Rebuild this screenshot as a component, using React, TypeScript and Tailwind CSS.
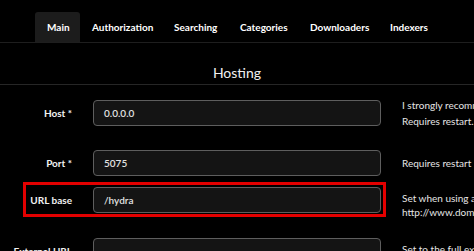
const tabs = [
  { name: 'Main', w: 'w-[45px]', active: true },
  { name: 'Authorization', w: 'w-[82px]' },
  { name: 'Searching', w: 'w-[66px]' },
  { name: 'Categories', w: 'w-[70px]' },
  { name: 'Downloaders', w: 'w-[80px]' },
  { name: 'Indexers', w: 'w-[70px]' },
];

function Field({ label, value, blurred }: { label: string; value?: string; blurred?: boolean }) {
  return (
    <>
      <div className="flex h-[26px] w-[46px] shrink-0 items-center justify-end whitespace-nowrap text-[10px] font-bold text-[#f2f2f2]">
        {label}
      </div>
      <div className="ml-[21px] flex h-[26px] w-[288px] shrink-0 items-center rounded-[4px] border border-[#5e5e5e] bg-[#141414] pl-[10px] text-[10px] font-semibold text-[#e2e2e2]">
        {value}
        {blurred && (
          <div className="mt-[12px] flex gap-[2px]">
            <span className="h-[6px] w-[10px] bg-[#8a8a8a]" />
            <span className="h-[6px] w-[6px] bg-[#6a6a6a]" />
            <span className="h-[6px] w-[12px] bg-[#9a9a9a]" />
            <span className="h-[6px] w-[8px] bg-[#5a5a5a]" />
            <span className="h-[6px] w-[10px] bg-[#808080]" />
          </div>
        )}
      </div>
    </>
  );
}

export default function App() {
  return (
    <div
      className="h-[251px] w-[474px] overflow-hidden bg-black text-[#eeeeee]"
      style={{ fontFamily: 'Lato, "Open Sans", sans-serif' }}
    >
      {/* Tabs */}
      <div className="mt-[12px] flex h-[31px] border-b border-[#1e1e1e] pl-[35px]">
        {tabs.map(t => (
          <div
            key={t.name}
            className={`${t.w} flex shrink-0 items-center rounded-t-[3px] pl-[12px] text-[10px] font-bold text-white ${
              t.active ? 'bg-[#1c1c1c]' : ''
            }`}
          >
            {t.name}
          </div>
        ))}
      </div>

      {/* Section title */}
      <div className="mt-[17px] flex h-[25px] items-center justify-center border-b border-[#262626] text-[14px] text-[#f0f0f0]">
        Hosting
      </div>

      {/* Host */}
      <div className="mt-[10px] flex items-start">
        <div className="ml-[23px] flex w-[363px] shrink-0 items-start border-[3px] border-transparent pt-[2px] pb-px pr-[2px]">
          <Field label="Host *" value="0.0.0.0" />
        </div>
        <div className="ml-[16px] mt-[2px] whitespace-nowrap text-[10px] leading-4 text-[#e6e6e6]">
          <div>I strongly recommend using 127.0.0.1</div>
          <div>Requires restart.</div>
        </div>
      </div>

      {/* Port */}
      <div className="mt-[15px] flex items-start">
        <div className="ml-[23px] flex w-[363px] shrink-0 items-start border-[3px] border-transparent pt-[2px] pb-px pr-[2px]">
          <Field label="Port *" value="5075" />
        </div>
        <div className="ml-[16px] mt-[10px] whitespace-nowrap text-[10px] leading-4 text-[#e6e6e6]">
          Requires restart
        </div>
      </div>

      {/* URL base (highlighted) */}
      <div className="mt-[2px] flex items-start">
        <div className="ml-[23px] flex w-[363px] shrink-0 items-start border-[3px] border-[#e30000] pt-[2px] pb-px pr-[2px]">
          <Field label="URL base" value="/hydra" />
        </div>
        <div className="ml-[16px] mt-[9px] whitespace-nowrap text-[10px] leading-[14px] text-[#e6e6e6]">
          <div>Set when using a reverse proxy.</div>
          <div>http://www.domain.com/hydra</div>
        </div>
      </div>

      {/* External URL */}
      <div className="mt-[14px] flex items-start">
        <div className="ml-[23px] flex w-[363px] shrink-0 items-start border-[3px] border-transparent pt-[2px] pb-px pr-[2px]">
          <Field label="External URL" blurred />
        </div>
        <div className="ml-[16px] mt-[8px] whitespace-nowrap text-[10px] leading-4 text-[#e6e6e6]">
          Set to the full external URL
        </div>
      </div>
    </div>
  );
}
